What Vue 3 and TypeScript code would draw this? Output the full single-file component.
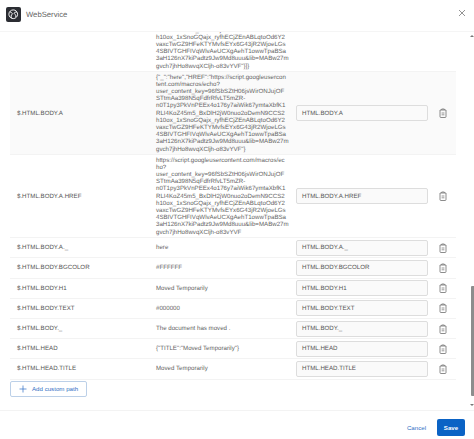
<script setup lang="ts">
interface Row {
  path: string
  value: string
  field: string
  shaded?: boolean
}

const tail = `h10ox_1xSnoGQajx_ryfhECjZEnABLqtoOd6Y2
vaxcTwGZ9HFeKTYMvfsEYx6G43jR2WjoeLGs
4SBIVTGHFIVqWlvAeUCXgAehT1owwTpaBSa
3aH126nX7kiPadtz9Jw9Md8uuu&lib=MABw27m
gvch7jhHo8wvqXCljh-o83vYVF`

const key = `user_content_key=96fSbSZtH06jsWirONJujOF
STtmAa398N5qFdfrRfvLT5mZR-
n0T1py3PkVnPEEx4o176y7aiWik67ymtaXbfK1
RLI4KoZ45m5_BxDlH2jW0nuo2oDemN9CCS2`

const rows: Row[] = [
  {
    path: '',
    value: `${key}\n${tail}"}]}`,
    field: ''
  },
  {
    path: '$.HTML.BODY.A',
    value: `{"_":"here","HREF":"https://script.googleusercon
tent.com/macros/echo?
${key}
${tail}"}`,
    field: 'HTML.BODY.A',
    shaded: true
  },
  {
    path: '$.HTML.BODY.A.HREF',
    value: `https://script.googleusercontent.com/macros/ec
ho?
${key}
${tail}`,
    field: 'HTML.BODY.A.HREF'
  },
  { path: '$.HTML.BODY.A._', value: 'here', field: 'HTML.BODY.A._' },
  { path: '$.HTML.BODY.BGCOLOR', value: '#FFFFFF', field: 'HTML.BODY.BGCOLOR' },
  { path: '$.HTML.BODY.H1', value: 'Moved Temporarily', field: 'HTML.BODY.H1' },
  { path: '$.HTML.BODY.TEXT', value: '#000000', field: 'HTML.BODY.TEXT' },
  { path: '$.HTML.BODY._', value: 'The document has moved .', field: 'HTML.BODY._' },
  { path: '$.HTML.HEAD', value: '{"TITLE":"Moved Temporarily"}', field: 'HTML.HEAD' },
  { path: '$.HTML.HEAD.TITLE', value: 'Moved Temporarily', field: 'HTML.HEAD.TITLE' }
]
</script>

<template>
  <div class="dialog">
    <header class="head">
      <span class="logo">
        <svg viewBox="0 0 14 14" width="14.5" height="14.5" fill="none" stroke="#fff" stroke-width="0.9">
          <circle cx="7" cy="7" r="4.2" />
          <path d="M3.6 4.8c1.4.2 2.2.8 2.6 1.8-.5 1-1.3 1.2-1.3 2.2 0 .7.4 1.1.4 1.9M10.6 4.8c-1.3 0-2.3.4-2.9 1.3.3 1 1.4 1.2 1.9 2 .2.5-.2 1-.5 1.6" />
        </svg>
      </span>
      <span class="title">WebService</span>
      <svg class="close" viewBox="0 0 8 8" width="8" height="8" fill="none" stroke="#666" stroke-width="0.7">
        <path d="M1 1l6 6M7 1L1 7" />
      </svg>
    </header>

    <div class="body">
      <div class="scroller">
        <div class="content">
          <div v-for="(row, i) in rows" :key="i" class="row" :class="{ shaded: row.shaded }">
            <div class="path">{{ row.path }}</div>
            <div class="value">{{ row.value }}</div>
            <div class="field">
              <div v-if="row.field" class="input">{{ row.field }}</div>
            </div>
            <div class="action">
              <svg v-if="row.field" viewBox="0 0 8 10" width="8" height="10" fill="none" stroke="#6f6f6f" stroke-width="0.8">
                <path d="M1 2h6v6.6a.9.9 0 0 1-.9.9H1.9a.9.9 0 0 1-.9-.9z" />
                <path d="M2.7 2V1h2.6v1" />
                <path d="M2.6 5h2.8M2.6 6.8h2.8" stroke-width="0.7" />
              </svg>
            </div>
          </div>
          <button class="add" type="button">
            <svg viewBox="0 0 8 8" width="8" height="8" fill="none" stroke="#2f6fc4" stroke-width="0.7">
              <path d="M4 .5v7M.5 4h7" />
            </svg>
            <span>Add custom path</span>
          </button>
        </div>
      </div>
      <div class="track">
        <span class="arrow up"></span>
        <span class="thumb"></span>
        <span class="arrow down"></span>
      </div>
    </div>

    <footer class="foot">
      <button class="cancel" type="button">Cancel</button>
      <button class="save" type="button">Save</button>
    </footer>
  </div>
</template>

<style scoped>
.dialog {
  width: 474px;
  height: 439px;
  display: flex;
  flex-direction: column;
  overflow: hidden;
  background: #fff;
  font-family: "Liberation Sans", Arial, sans-serif;
  color: #555;
  text-rendering: geometricPrecision;
}
.head {
  height: 32px;
  flex: none;
  display: flex;
  align-items: center;
  padding: 0 8px 2px 6px;
  box-sizing: border-box;
  border-bottom: 1px solid #f5f5f5;
}
.logo {
  width: 14.5px;
  height: 14.5px;
  border-radius: 2px;
  background: #2b2d33;
  display: flex;
}
.title {
  margin-left: 5.5px;
  font-size: 7.7px;
  color: #666;
  flex: 1;
}
.close {
  margin-bottom: 3px;
}
.body {
  height: 378px;
  flex: none;
  display: flex;
  overflow: hidden;
}
.scroller {
  flex: 1;
  min-width: 0;
  padding-left: 10px;
  overflow: hidden;
  display: flex;
  flex-direction: column;
  justify-content: flex-end;
}
.content {
  flex: none;
  width: 446px;
  padding-bottom: 13px;
}
.row {
  display: grid;
  grid-template-columns: 146px 140px 132px 28px;
  align-items: center;
  border-bottom: 1px solid #f3f3f3;
  box-sizing: border-box;
  min-height: 20.2px;
}
.row.shaded {
  background: #fafafa;
}
.path {
  padding-left: 7px;
  font-size: 6.15px;
  color: #555;
}
.value {
  font-size: 6.15px;
  line-height: 7.2px;
  white-space: pre-line;
  color: #666;
  padding: 1.4px 0;
}
.input {
  height: 16px;
  border: 1px solid #ddd;
  border-radius: 2px;
  background: #fafafa;
  box-sizing: border-box;
  display: flex;
  align-items: center;
  padding-left: 5px;
  font-size: 6.15px;
  color: #555;
}
.action {
  display: flex;
  justify-content: center;
  padding-left: 2px;
}
.add {
  margin-top: 1px;
  width: 76.5px;
  height: 16.5px;
  display: flex;
  align-items: center;
  gap: 5px;
  padding: 0 0 0 8px;
  border: 1px solid #bcd0e8;
  border-radius: 2px;
  background: #fff;
  color: #2f6fc4;
  font: 6.15px "Liberation Sans", Arial, sans-serif;
}
.track {
  width: 9px;
  flex: none;
  display: flex;
  flex-direction: column;
  align-items: flex-end;
  justify-content: flex-end;
  padding: 3px 0 4px;
  box-sizing: border-box;
}
.arrow {
  width: 0;
  height: 0;
  border-left: 2px solid transparent;
  border-right: 2px solid transparent;
}
.arrow.up {
  border-bottom: 2px solid #777;
  margin-bottom: auto;
}
.arrow.down {
  border-top: 2px solid #777;
  margin-top: 8px;
}
.thumb {
  width: 3.5px;
  height: 110px;
  background: #8d8d8d;
  border-radius: 1px 0 0 1px;
}
.foot {
  flex: 1;
  border-top: 1px solid #f3f3f3;
  display: flex;
  align-items: center;
  justify-content: flex-end;
  gap: 11px;
  padding: 5px 9px 0 0;
}
.cancel {
  border: 0;
  background: none;
  padding: 0;
  color: #2f6fc4;
  font: 6.15px "Liberation Sans", Arial, sans-serif;
}
.save {
  width: 28px;
  height: 16.5px;
  border: 0;
  border-radius: 2px;
  background: #0b63c5;
  color: #fff;
  font: bold 6.15px "Liberation Sans", Arial, sans-serif;
}
</style>
